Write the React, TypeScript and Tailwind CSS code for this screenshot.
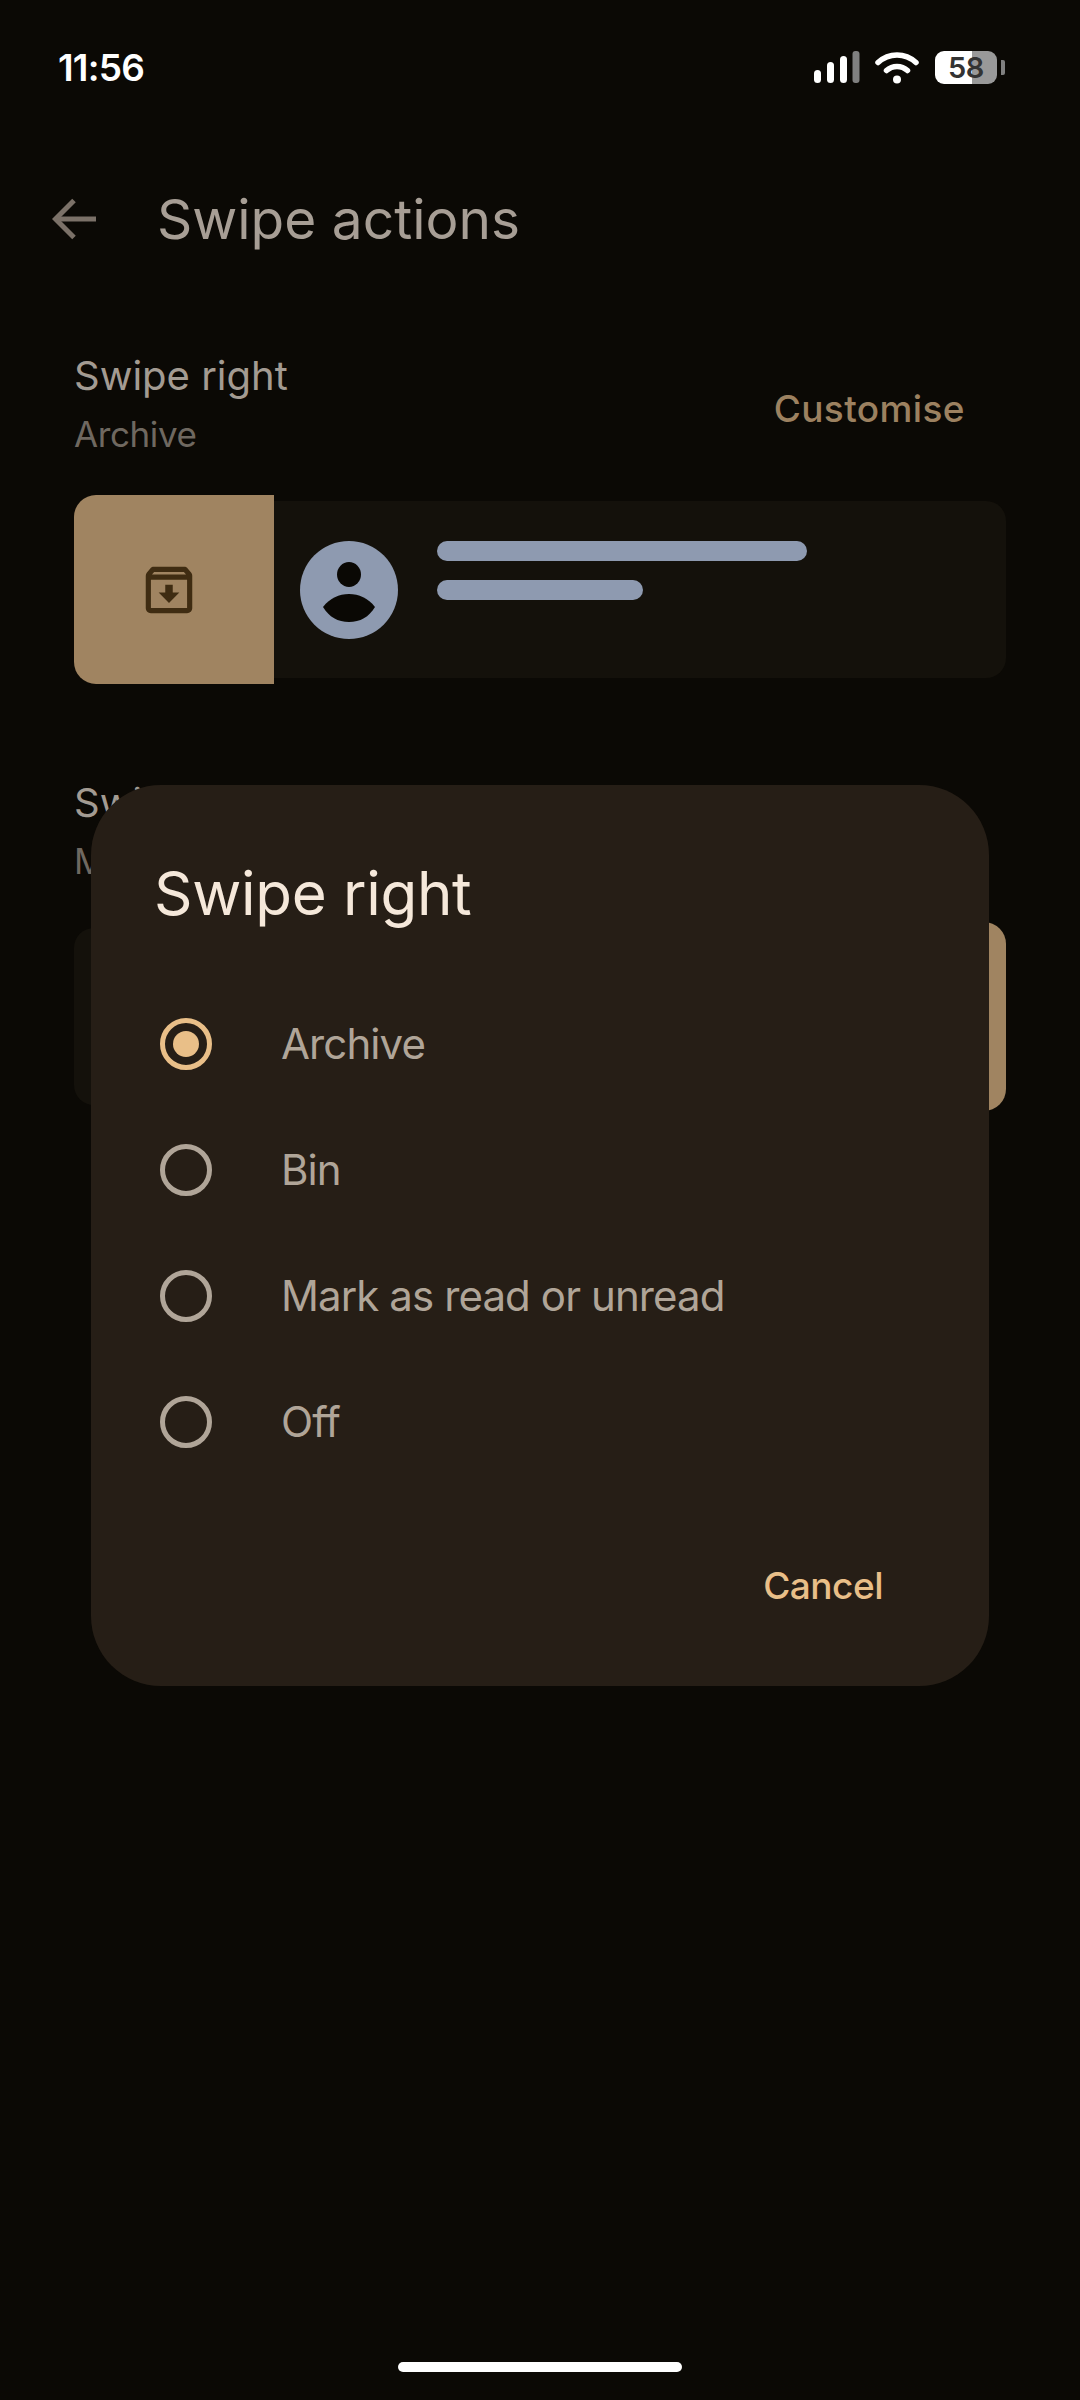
const font = "font-['Inter','Noto_Sans',sans-serif]";

function StatusBar() {
  return (
    <div className="flex h-[134px] items-center justify-between pl-[58px] pr-[75px]">
      <span className="text-[37px] font-semibold leading-none tracking-[-0.8px] text-white">11:56</span>
      <div className="flex items-center">
        <svg width="46" height="32" viewBox="0 0 46 32" className="mr-[15px]">
          <rect x="0" y="19" width="7" height="13" rx="3.5" fill="#fff" />
          <rect x="13" y="11" width="7" height="21" rx="3.5" fill="#fff" />
          <rect x="26" y="5" width="7" height="27" rx="3.5" fill="#fff" />
          <rect x="38.5" y="0" width="7" height="32" rx="3" fill="#808080" />
        </svg>
        <svg width="44" height="33" viewBox="0 0 44 33" fill="none" className="mr-[16px]">
          <path d="M3 11.5C14 1.5 30 1.5 41 11.5" stroke="#fff" strokeWidth="5.5" strokeLinecap="round" />
          <path d="M11.5 19.5C17.5 14 26.500 14 32.500 19.5" stroke="#fff" strokeWidth="5.5" strokeLinecap="round" />
          <circle cx="22" cy="28.500" r="4" fill="#fff" />
        </svg>
        <div className="flex h-[33px] w-[62px] items-center justify-center rounded-[9px] bg-[linear-gradient(90deg,#ffffff_0,#ffffff_60%,#999999_60%,#999999_100%)] text-[29px] font-semibold leading-none tracking-[-0.5px] text-[#333333]">
          58
        </div>
        <div className="ml-[4px] h-[15px] w-[4px] rounded-r-[2px] bg-[#808080]" />
      </div>
    </div>
  );
}

function Header() {
  return (
    <div className="flex h-[170px] items-center pl-[52px]">
      <svg width="44" height="42" viewBox="0 0 44 42" fill="none" stroke="#7b7168" strokeWidth="5">
        <path d="M44 21H4" />
        <path d="M22 2.500L3.500 21L22 39.500" />
      </svg>
      <h1 className="ml-[61px] text-[55px] font-normal leading-none tracking-[0px] text-[#a79e95]">Swipe actions</h1>
    </div>
  );
}

function Avatar() {
  return (
    <svg width="98" height="98" viewBox="0 0 98 98" className="shrink-0">
      <circle cx="49" cy="49" r="49" fill="#8e9ab0" />
      <ellipse cx="49" cy="33.500" rx="12" ry="12.500" fill="#0a0804" />
      <path d="M23 66C30 57 39 53 49 53C59 53 68 57 75 66C69 76 60 81 49 81C38 81 29 76 23 66Z" fill="#0a0804" />
    </svg>
  );
}

function Section({ title, value, actionSide }: { title: string; value: string; actionSide: "left" | "right" }) {
  return (
    <div className="px-[74px]">
      <div className="flex items-center justify-between">
        <div>
          <p className="text-[40px] font-normal leading-[52px] tracking-[0px] text-[#a39b92]">{title}</p>
          <p className="mt-[9px] text-[35px] leading-[46px] tracking-[-0.4px] text-[#6f6860]">{value}</p>
        </div>
        <span className="mr-[41px] mt-[10px] text-[37px] font-medium tracking-[0.4px] text-[#9c8160]">Customise</span>
      </div>
      <div className="relative mt-[38px] h-[189px]">
        <div className="flex h-[177px] translate-y-[6px] items-center rounded-[20px] bg-[#14110b]">
          {actionSide === "left" && (
            <>
              <div className="w-[200px] shrink-0" />
              <div className="ml-[26px]"><Avatar /></div>
              <div className="ml-[39px] flex flex-col gap-[19px] self-start pt-[40px]">
                <div className="h-[20px] w-[370px] rounded-full bg-[#8e9ab0]" />
                <div className="h-[20px] w-[206px] rounded-full bg-[#8e9ab0]" />
              </div>
            </>
          )}
        </div>
        {actionSide === "left" ? (
          <div className="absolute left-0 top-0 flex h-[189px] w-[200px] items-center justify-center rounded-l-[22px] bg-[#a08461]">
            <svg width="62" height="62" viewBox="0 0 24 24" fill="#3f2c12" className="mr-[11px]">
              <path d="M20.54 5.23l-1.39-1.68C18.88 3.21 18.47 3 18 3H6c-.47 0-.88.21-1.16.55L3.46 5.23C3.17 5.57 3 6.02 3 6.5V19c0 1.1.9 2 2 2h14c1.1 0 2-.9 2-2V6.5c0-.48-.17-.93-.46-1.27zM6.24 5h11.52l.83 1H5.42l.82-1zM5 19V8h14v11H5zm8.45-9h-2.9v3H8l4 4 4-4h-2.55z" />
            </svg>
          </div>
        ) : (
          <div className="absolute right-0 top-0 h-[189px] w-[200px] rounded-r-[22px] bg-[#a08461]" />
        )}
      </div>
    </div>
  );
}

function Radio({ label, selected }: { label: string; selected?: boolean }) {
  return (
    <div className="flex h-[126px] items-center pl-[69px]">
      <div
        className={
          selected
            ? "flex h-[52px] w-[52px] items-center justify-center rounded-full border-[5px] border-[#e9bf88]"
            : "h-[52px] w-[52px] rounded-full border-[5px] border-[#b0a598]"
        }
      >
        {selected && <div className="h-[26px] w-[26px] rounded-full bg-[#e9bf88]" />}
      </div>
      <span className="ml-[69px] text-[42px] leading-none tracking-[-0.9px] text-[#b0a598]">{label}</span>
    </div>
  );
}

function SwipeDialog() {
  return (
    <div className="absolute left-[91px] top-[785px] flex h-[901px] w-[898px] flex-col rounded-[70px] bg-[#261e16]">
      <h2 className="ml-[63px] mt-[70px] text-[60px] font-normal leading-[76px] tracking-[-0.3px] text-[#f5e8da]">Swipe right</h2>
      <div className="mt-[50px]">
        <Radio label="Archive" selected />
        <Radio label="Bin" />
        <Radio label="Mark as read or unread" />
        <Radio label="Off" />
      </div>
      <div className="mt-[82px] flex justify-end pr-[106px]">
        <span className="text-[37px] font-medium leading-none tracking-[-0.5px] text-[#e9bf88]">Cancel</span>
      </div>
    </div>
  );
}

export default function App() {
  return (
    <main className={`relative flex h-[2400px] w-[1080px] flex-col overflow-hidden bg-[#0b0905] ${font}`}>
      <StatusBar />
      <Header />
      <div className="flex flex-col gap-[93px] pt-[46px]">
        <Section title="Swipe right" value="Archive" actionSide="left" />
        <Section title="Swipe left" value="Mark as read or unread" actionSide="right" />
      </div>
      <SwipeDialog />
      <div className="mt-auto mb-[28px] h-[10px] w-[284px] self-center rounded-full bg-white" />
    </main>
  );
}
